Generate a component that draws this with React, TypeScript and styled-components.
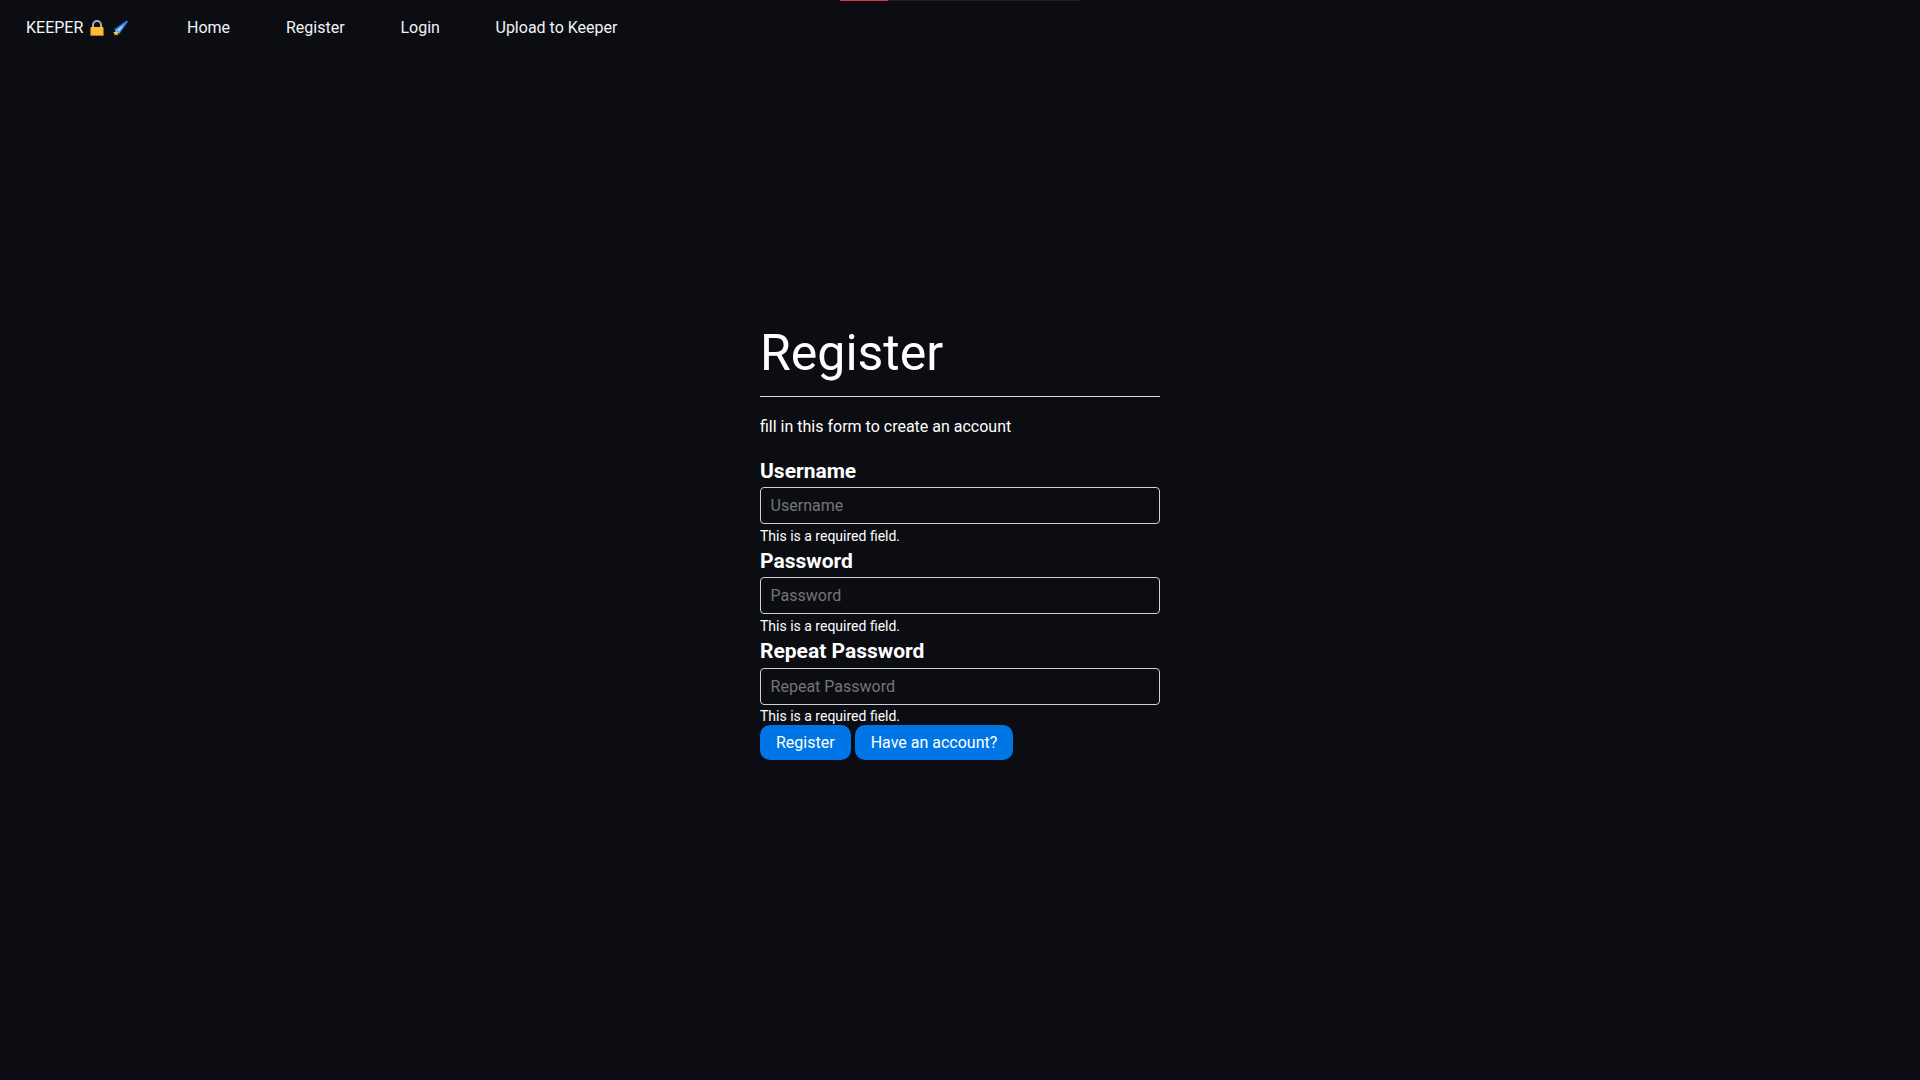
import React from "react";
import styled, { createGlobalStyle } from "styled-components";

const Global = createGlobalStyle`
  html, body { margin: 0; padding: 0; background: #0b0d12; }
  body { font-family: Roboto, "Liberation Sans", sans-serif; color: #fff; font-size: 16px; line-height: 24px; min-height: 1080px; }
  * { box-sizing: border-box; }
`;

const Page = styled.div`
  min-height: 1080px;
  display: flex;
  flex-direction: column;
  align-items: stretch;
  background: #0b0d12;
`;

const Progress = styled.div`
  height: 1px;
  display: flex;
  margin-left: 840px;
  width: 241px;
  background: #1f2023;
`;

const ProgressFill = styled.div`
  width: 48px;
  height: 100%;
  background: #dc3545;
`;

const Nav = styled.nav`
  height: 53px;
  display: flex;
  align-items: center;
  padding-left: 26px;
`;

const Brand = styled.a`
  display: flex;
  align-items: center;
  width: 161px;
  color: #f4f5f6;
`;

const Emoji = styled.svg`
  display: block;
  flex: none;
`;

const LockIcon = styled(Emoji)`
  margin-left: 3px;
`;

const CometIcon = styled(Emoji)`
  margin-left: 9px;
`;

const NavLink = styled.a<{ $w: number }>`
  width: ${(p) => p.$w}px;
  color: #f1f3f5;
  white-space: nowrap;
`;

const Main = styled.main`
  width: 400px;
  margin: 270px 0 0 760px;
`;

const Title = styled.h1`
  margin: 0;
  font-size: 50px;
  line-height: 58px;
  font-weight: 400;
  color: #fff;
`;

const Rule = styled.hr`
  margin: 14px 0 0;
  border: 0;
  border-top: 1px solid #d8d8d8;
`;

const Lead = styled.p`
  margin: 18px 0 19px;
  font-size: 16px;
  line-height: 24px;
  color: #fff;
`;

const Field = styled.div`
  display: flex;
  flex-direction: column;
  & + & { margin-top: 3.4px; }
`;

const Label = styled.label`
  font-size: 21px;
  line-height: 26px;
  font-weight: 700;
  color: #fff;
  margin-bottom: 3.25px;
`;

const Input = styled.input`
  height: 37px;
  width: 100%;
  padding: 0 9.6px;
  background: transparent;
  border: 1px solid #cfd0d2;
  border-radius: 4px;
  color: #fff;
  font: 400 16px Roboto, sans-serif;
  outline: none;
  &::placeholder { color: #757575; opacity: 1; }
`;

const Hint = styled.small`
  display: block;
  font-size: 14px;
  line-height: 18px;
  margin-top: 2.5px;
  color: #fff;
`;

const Buttons = styled.div`
  display: flex;
  gap: 4px;
`;

const Button = styled.button`
  height: 35px;
  padding: 0 16px;
  border: 0;
  border-radius: 10px;
  background: #0076e6;
  color: #fff;
  font: 400 16px Roboto, sans-serif;
`;

const fields = ["Username", "Password", "Repeat Password"];

export default function App() {
  return (
    <Page>
      <Global />
      <Progress>
        <ProgressFill />
      </Progress>
      <Nav>
        <Brand>
          KEEPER&nbsp;
          <LockIcon width="14" height="16" viewBox="0 0 14 16">
            <path d="M3 8V5a4 4 0 0 1 8 0v3" fill="none" stroke="#a9adb3" strokeWidth="2" />
            <rect x="0.5" y="7" width="13" height="9" rx="1" fill="#fdbb3a" />
            <rect x="0.5" y="15" width="13" height="1" fill="#c8691e" />
          </LockIcon>
          <CometIcon width="15" height="16" viewBox="0 0 15 16">
            <path d="M1 9.500 L13.500 0.500 L15 1.500 L6 14.500 Z" fill="#2f7fe6" />
            <path d="M3.500 10 L11.500 4 L6 12 Z" fill="#a8d4fa" />
            <path d="M3 10 l1 1.900 2 .3-1.500 1.300.4 2-1.900-1-1.800 1 .4-2L0 12.200l2.100-.3z" fill="#fbd23c" />
          </CometIcon>
        </Brand>
        <NavLink $w={99}>Home</NavLink>
        <NavLink $w={114.500}>Register</NavLink>
        <NavLink $w={95}>Login</NavLink>
        <NavLink $w={140}>Upload to Keeper</NavLink>
      </Nav>
      <Main>
        <Title>Register</Title>
        <Rule />
        <Lead>fill in this form to create an account</Lead>
        {fields.map((f) => (
          <Field key={f}>
            <Label>{f}</Label>
            <Input placeholder={f} />
            <Hint>This is a required field.</Hint>
          </Field>
        ))}
        <Buttons>
          <Button>Register</Button>
          <Button>Have an account?</Button>
        </Buttons>
      </Main>
    </Page>
  );
}
